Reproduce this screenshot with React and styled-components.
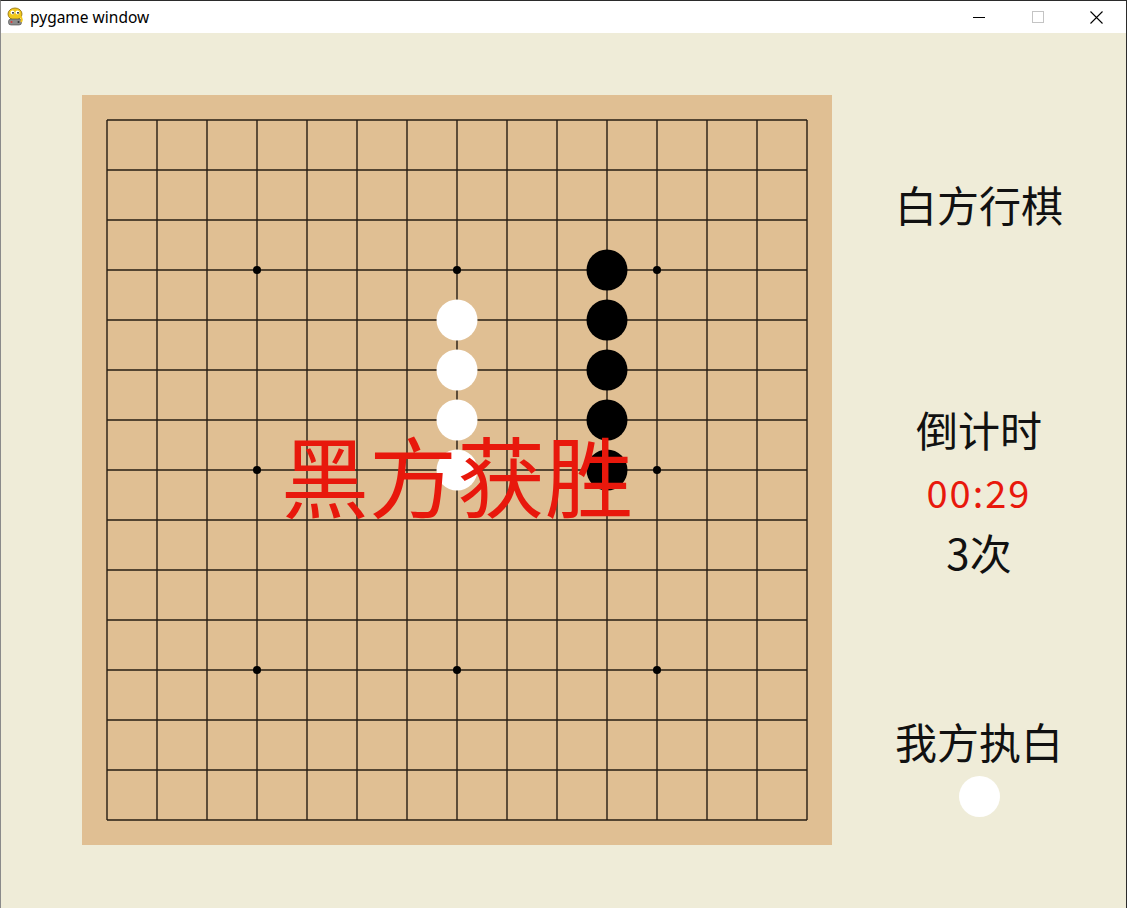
import styled, { createGlobalStyle } from 'styled-components';

const GlobalStyle = createGlobalStyle`
  html, body {
    margin: 0;
    padding: 0;
    background: #efecd8;
  }
  body {
    font-family: "Noto Sans CJK SC", "Noto Sans", sans-serif;
  }
`;

const Window = styled.div`
  width: 1127px;
  height: 908px;
  box-sizing: border-box;
  border-top: 1px solid #2b2b2b;
  border-left: 1px solid #8a8a8a;
  border-right: 1px solid #2b2b2b;
  display: flex;
  flex-direction: column;
  overflow: hidden;
`;

const TitleBar = styled.div`
  height: 32px;
  background: #ffffff;
  display: flex;
  align-items: center;
  flex-shrink: 0;
`;

const TitleIcon = styled.div`
  width: 18px;
  height: 20px;
  margin: 0 6px 0 5px;
  display: flex;
`;

const TitleText = styled.span`
  font-family: "Noto Sans", "Liberation Sans", sans-serif;
  font-size: 15.5px;
  color: #000;
  flex: 1;
`;

const Controls = styled.div`
  display: flex;
  height: 100%;
`;

const ControlButton = styled.div`
  width: 59px;
  height: 100%;
  display: flex;
  align-items: center;
  justify-content: center;
`;

const Content = styled.div`
  flex: 1;
  display: flex;
  padding: 62px 0 0 81px;
  background: #efecd8;
`;

const Board = styled.div`
  position: relative;
  width: 750px;
  height: 750px;
  background: #e0bf93;
  flex-shrink: 0;
`;

const WinnerText = styled.div`
  position: absolute;
  left: 0;
  right: 0;
  top: 323px;
  text-align: center;
  font-size: 88px;
  line-height: 110px;
  color: #e8180c;
  pointer-events: none;
`;

const Panel = styled.div`
  flex: 1;
  display: flex;
  flex-direction: column;
  align-items: center;
  margin-top: -62px;
`;

const Label = styled.div`
  font-size: 42px;
  line-height: 50px;
  color: ${(p) => p.$color || '#111'};
  margin-top: ${(p) => p.$top}px;
  letter-spacing: ${(p) => p.$spacing || 0}px;
  white-space: nowrap;
`;

const Timer = styled(Label)`
  font-size: 38px;
`;

const StoneBadge = styled.div`
  width: 41px;
  height: 41px;
  border-radius: 50%;
  background: #ffffff;
  margin-top: 10px;
`;

const SIZE = 15;
const GAP = 50;
const OFF = 25;
const stars = [3, 7, 11];
const whites = [[7, 4], [7, 5], [7, 6], [7, 7]];
const blacks = [[10, 3], [10, 4], [10, 5], [10, 6], [10, 7]];

function BoardLines() {
  const end = OFF + GAP * (SIZE - 1);
  const lines = [];
  for (let i = 0; i < SIZE; i++) {
    const p = OFF + i * GAP;
    lines.push(<line key={'h' + i} x1={OFF} y1={p} x2={end} y2={p} />);
    lines.push(<line key={'v' + i} x1={p} y1={OFF} x2={p} y2={end} />);
  }
  return (
    <svg width="750" height="750" viewBox="0 0 750 750" style={{ display: 'block' }}>
      <g stroke="#261c12" strokeWidth="1.4">{lines}</g>
      {stars.map((x) =>
        stars.map((y) => (
          <circle key={x + '-' + y} cx={OFF + x * GAP} cy={OFF + y * GAP} r="4" fill="#000" />
        ))
      )}
      {whites.map(([x, y]) => (
        <circle key={'w' + x + y} cx={OFF + x * GAP} cy={OFF + y * GAP} r="20.5" fill="#fff" />
      ))}
      {blacks.map(([x, y]) => (
        <circle key={'b' + x + y} cx={OFF + x * GAP} cy={OFF + y * GAP} r="20.5" fill="#000" />
      ))}
    </svg>
  );
}

function PygameIcon() {
  return (
    <svg width="18" height="20" viewBox="0 0 18 20">
      <ellipse cx="9" cy="7" rx="7" ry="6" fill="#f2c81c" stroke="#8a6a08" strokeWidth="0.8" />
      <circle cx="6.5" cy="5.5" r="2" fill="#fff" />
      <circle cx="11.5" cy="5.5" r="2" fill="#fff" />
      <circle cx="7" cy="5.8" r="0.9" fill="#000" />
      <circle cx="12" cy="5.8" r="0.9" fill="#000" />
      <rect x="2.5" y="12" width="13" height="6" rx="2.5" fill="#8c8c8c" stroke="#444" strokeWidth="0.6" />
      <circle cx="5.5" cy="15" r="1" fill="#d33" />
      <circle cx="12.5" cy="15" r="1" fill="#333" />
      <path d="M14 9 Q17 12 15 15" stroke="#f2c81c" strokeWidth="2" fill="none" />
    </svg>
  );
}

export default function App() {
  return (
    <>
      <GlobalStyle />
      <Window>
        <TitleBar>
          <TitleIcon>
            <PygameIcon />
          </TitleIcon>
          <TitleText>pygame window</TitleText>
          <Controls>
            <ControlButton>
              <svg width="12" height="12" viewBox="0 0 12 12">
                <line x1="0" y1="6.5" x2="12" y2="6.5" stroke="#000" strokeWidth="1" />
              </svg>
            </ControlButton>
            <ControlButton>
              <svg width="12" height="12" viewBox="0 0 12 12">
                <rect x="0.5" y="0.5" width="11" height="11" fill="none" stroke="#c4c4c4" strokeWidth="1" />
              </svg>
            </ControlButton>
            <ControlButton>
              <svg width="13" height="13" viewBox="0 0 13 13">
                <path d="M0.5 0.5 L12.5 12.5 M12.5 0.5 L0.5 12.5" stroke="#000" strokeWidth="1.1" />
              </svg>
            </ControlButton>
          </Controls>
        </TitleBar>
        <Content>
          <Board>
            <BoardLines />
            <WinnerText>黑方获胜</WinnerText>
          </Board>
          <Panel>
            <Label $top={146}>白方行棋</Label>
            <Label $top={175}>倒计时</Label>
            <Timer $top={13} $color="#e8180c" $spacing={2}>00:29</Timer>
            <Label $top={10}>3次</Label>
            <Label $top={139}>我方执白</Label>
            <StoneBadge />
          </Panel>
        </Content>
      </Window>
    </>
  );
}
